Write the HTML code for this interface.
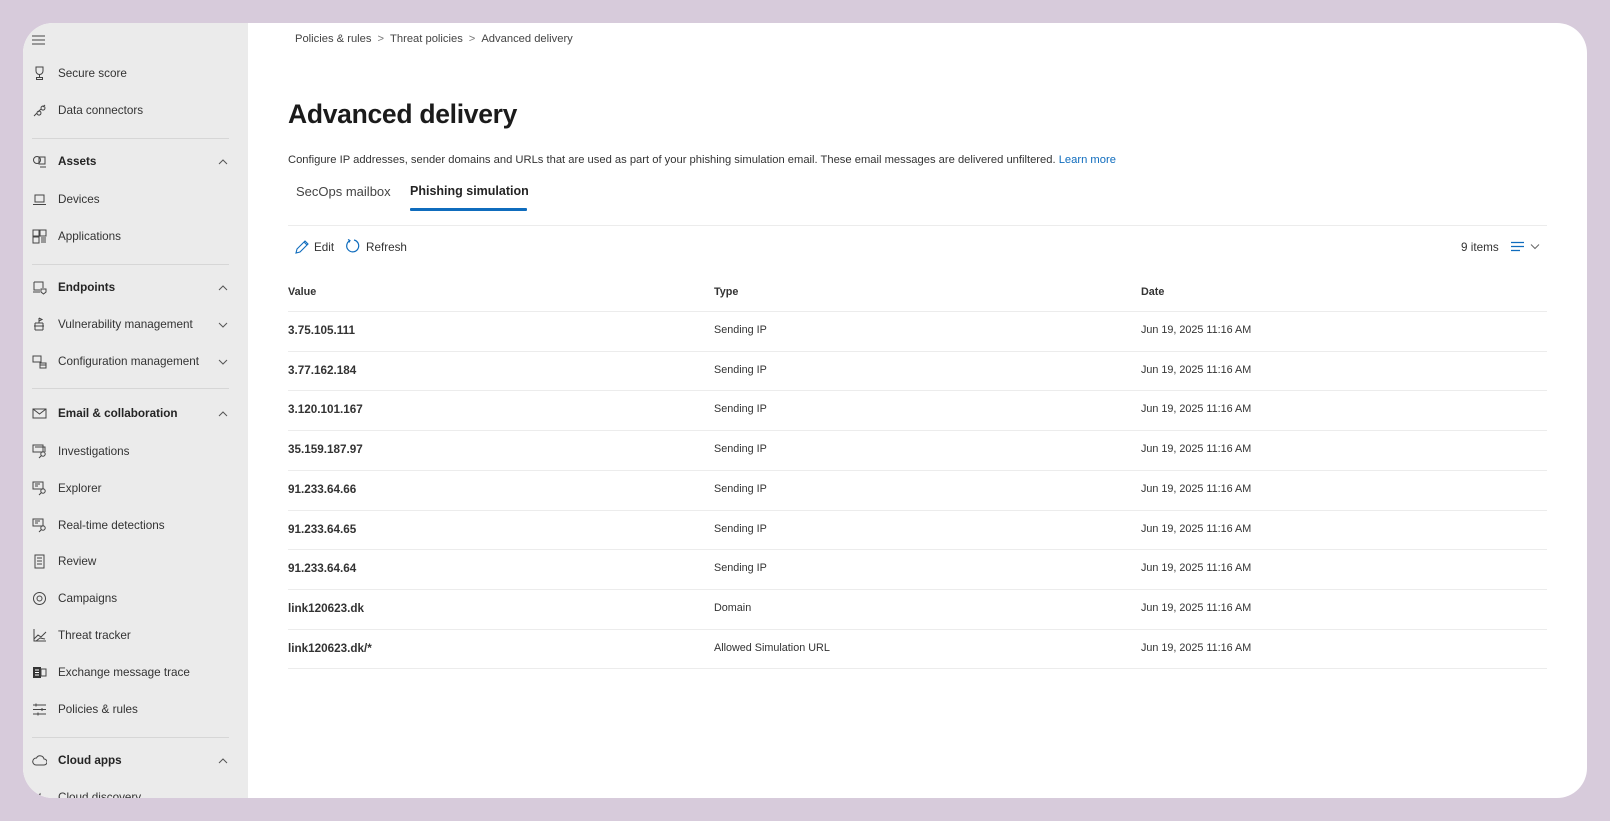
<!DOCTYPE html>
<html><head><meta charset="utf-8"><style>
*{box-sizing:border-box;margin:0;padding:0}
body{width:1610px;height:821px;background:#d7cbdb;font-family:"Liberation Sans",sans-serif;overflow:hidden;position:relative;color:#242424}
.card{position:absolute;left:23px;top:23px;width:1564px;height:775px;background:#fff;border-radius:30px;overflow:hidden}
.side{position:absolute;left:0;top:0;width:225px;height:100%;background:#ebebeb}
.ni{position:absolute;left:0;width:225px;height:30px;font-size:11.7px;color:#333}
.ni .ic{position:absolute;left:9px;top:7px;width:15px;height:15px}
.ni .t{position:absolute;left:35px;top:8px;white-space:nowrap}
.ni.b .t{font-weight:bold;color:#242424}
.ni .ch{position:absolute;left:194px;top:9px;width:12px;height:12px}
.dv{position:absolute;left:9px;width:197px;height:1px;background:#d6d6d6}
.main{position:absolute;left:265px;top:0;right:0;height:100%}
.bc{position:absolute;top:10px;left:7px;font-size:11.2px;color:#444;white-space:nowrap}
.bc span{margin:0 6px;color:#777}
h1{position:absolute;left:0;top:76px;font-size:26.5px;font-weight:bold;color:#1b1b1b;letter-spacing:-0.3px}
.desc{position:absolute;left:0;top:131px;font-size:11.2px;color:#333;white-space:nowrap}
.desc a{color:#0f6cbd;text-decoration:none}
.tab{position:absolute;top:161px;font-size:13px;color:#444}
.ul{position:absolute;left:122px;top:185px;width:117px;height:3px;background:#0f6cbd;border-radius:1px}
.hl{position:absolute;left:0;width:1259px;height:1px;background:#ececec}
.tb{position:absolute;top:218px;font-size:11.7px;color:#333}
.row{position:absolute;left:0;width:1259px;height:39.7px;font-size:10.8px;color:#333}
.row div{position:absolute;top:13px;white-space:nowrap}
.row .v{left:0;font-size:11.7px;font-weight:bold;color:#333}
.row .y{left:426px}
.row .d{left:853px}
</style></head><body>
<div class="card">
<div class="side">
<svg style="position:absolute;left:9px;top:12px" width="14" height="10" viewBox="0 0 14 10"><path d="M0 1h13M0 5h13M0 9h13" stroke="#444" stroke-width="1.1"/></svg>
<div class="ni" style="top:36px"><svg class="ic" viewBox="0 0 15 15"><path d="M4 1h7v4a3.5 3.5 0 0 1-7 0zM7.5 8.5v3M4.5 13.5h6v-2h-6z" fill="none" stroke="#444"/></svg><div class="t">Secure score</div></div>
<div class="ni" style="top:73px"><svg class="ic" viewBox="0 0 15 15"><path d="M2 13l3-3M5 10a2 2 0 1 1 0 .1M9 5a2 2 0 1 1 0 .1M11 4l2-2M6 9l3-3" fill="none" stroke="#444"/></svg><div class="t">Data connectors</div></div>
<div class="dv" style="top:115px"></div>
<div class="ni b" style="top:124px"><svg class="ic" viewBox="0 0 15 15"><circle cx="5" cy="6" r="3.5" fill="none" stroke="#444"/><path d="M7 3h6v7H7zM8 13h6" fill="none" stroke="#444"/></svg><div class="t">Assets</div><svg class="ch" viewBox="0 0 12 12"><path d="M2 8l4-4 4 4" fill="none" stroke="#555"/></svg></div>
<div class="ni" style="top:162px"><svg class="ic" viewBox="0 0 15 15"><path d="M3 3h9v7H3zM1 12.5h13" fill="none" stroke="#444"/></svg><div class="t">Devices</div></div>
<div class="ni" style="top:199px"><svg class="ic" viewBox="0 0 15 15"><path d="M1 1h6v6H1zM8 1h6v6H8zM1 8h6v6H1zM9 9h5M9 11h5M9 13h5" fill="none" stroke="#444"/></svg><div class="t">Applications</div></div>
<div class="dv" style="top:241px"></div>
<div class="ni b" style="top:250px"><svg class="ic" viewBox="0 0 15 15"><path d="M2 2h9v6M2 2v8h6M1 12h7" fill="none" stroke="#444"/><path d="M9 9h5v3l-2.5 2-2.5-2z" fill="none" stroke="#444"/></svg><div class="t">Endpoints</div><svg class="ch" viewBox="0 0 12 12"><path d="M2 8l4-4 4 4" fill="none" stroke="#555"/></svg></div>
<div class="ni" style="top:287px"><svg class="ic" viewBox="0 0 15 15"><path d="M7 1v5M7 1l3 1.5-3 1.5M3 6h8M2 9h10M3 13h8M3 6v7M11 6v7" fill="none" stroke="#444"/></svg><div class="t">Vulnerability management</div><svg class="ch" viewBox="0 0 12 12"><path d="M2 4l4 4 4-4" fill="none" stroke="#555"/></svg></div>
<div class="ni" style="top:324px"><svg class="ic" viewBox="0 0 15 15"><path d="M1 2h8v6H1zM8 9h6v5H8zM8 11h6" fill="none" stroke="#444"/></svg><div class="t">Configuration management</div><svg class="ch" viewBox="0 0 12 12"><path d="M2 4l4 4 4-4" fill="none" stroke="#555"/></svg></div>
<div class="dv" style="top:365px"></div>
<div class="ni b" style="top:376px"><svg class="ic" viewBox="0 0 15 15"><path d="M1 3h13v9H1zM1 3l6.5 5L14 3" fill="none" stroke="#444"/></svg><div class="t">Email &amp; collaboration</div><svg class="ch" viewBox="0 0 12 12"><path d="M2 8l4-4 4 4" fill="none" stroke="#555"/></svg></div>
<div class="ni" style="top:414px"><svg class="ic" viewBox="0 0 15 15"><path d="M1 1h10v7H1zM3 3h10v5" fill="none" stroke="#444"/><circle cx="11" cy="10" r="2.2" fill="none" stroke="#444"/><path d="M9.5 11.5L7 14" stroke="#444"/></svg><div class="t">Investigations</div></div>
<div class="ni" style="top:451px"><svg class="ic" viewBox="0 0 15 15"><path d="M1 1h10v7H1zM3 3h5M3 5h3" fill="none" stroke="#444"/><circle cx="11" cy="10" r="2.2" fill="none" stroke="#444"/><path d="M9.5 11.5L7 14" stroke="#444"/></svg><div class="t">Explorer</div></div>
<div class="ni" style="top:488px"><svg class="ic" viewBox="0 0 15 15"><path d="M1 1h10v7H1zM3 3h5M3 5h3" fill="none" stroke="#444"/><circle cx="11" cy="10" r="2.2" fill="none" stroke="#444"/><path d="M9.5 11.5L7 14" stroke="#444"/></svg><div class="t">Real-time detections</div></div>
<div class="ni" style="top:524px"><svg class="ic" viewBox="0 0 15 15"><path d="M3 1h9v13H3zM5 4h5M5 7h5M5 10h5" fill="none" stroke="#444"/></svg><div class="t">Review</div></div>
<div class="ni" style="top:561px"><svg class="ic" viewBox="0 0 15 15"><circle cx="7.5" cy="7.5" r="6" fill="none" stroke="#444"/><circle cx="7.5" cy="7.5" r="2.5" fill="none" stroke="#444"/></svg><div class="t">Campaigns</div></div>
<div class="ni" style="top:598px"><svg class="ic" viewBox="0 0 15 15"><path d="M2 1v12h12M2 11l4-4 3 2 5-5M4 13l4-3 5 1" fill="none" stroke="#444"/></svg><div class="t">Threat tracker</div></div>
<div class="ni" style="top:635px"><svg class="ic" viewBox="0 0 15 15"><path d="M1 2h8v11H1z" fill="#333"/><path d="M9 4h5v7H9z" fill="none" stroke="#444"/><path d="M3 5h4M3 7.5h4M3 10h4" stroke="#fff"/></svg><div class="t">Exchange message trace</div></div>
<div class="ni" style="top:672px"><svg class="ic" viewBox="0 0 15 15"><path d="M1 3h13M1 7.5h13M1 12h13M4 1.5v3M10 6v3M6 10.5v3" fill="none" stroke="#444"/></svg><div class="t">Policies &amp; rules</div></div>
<div class="dv" style="top:714px"></div>
<div class="ni b" style="top:723px"><svg class="ic" viewBox="0 0 15 15"><path d="M4 12h8a3 3 0 0 0 0-6 4 4 0 0 0-7.5-1A3.5 3.5 0 0 0 4 12z" fill="none" stroke="#444"/></svg><div class="t">Cloud apps</div><svg class="ch" viewBox="0 0 12 12"><path d="M2 8l4-4 4 4" fill="none" stroke="#555"/></svg></div>
<div class="ni" style="top:760px"><svg class="ic" viewBox="0 0 15 15"><path d="M2 10V4l3 3 3-3v6" fill="none" stroke="#444"/></svg><div class="t">Cloud discovery</div></div>
</div>
<div class="main">
<div class="bc">Policies &amp; rules<span>&gt;</span>Threat policies<span>&gt;</span>Advanced delivery</div>
<h1>Advanced delivery</h1>
<div class="desc">Configure IP addresses, sender domains and URLs that are used as part of your phishing simulation email. These email messages are delivered unfiltered. <a>Learn more</a></div>
<div class="tab" style="left:8px">SecOps mailbox</div>
<div class="tab" style="left:122px;font-weight:bold;color:#242424;font-size:12.5px">Phishing simulation</div>
<div class="ul"></div>
<div class="hl" style="top:202px"></div>
<svg style="position:absolute;left:6px;top:216px" width="16" height="16" viewBox="0 0 16 16"><path d="M2 14l1-4 8-8 3 3-8 8zM10 3l3 3" fill="none" stroke="#0f6cbd" stroke-width="1.1"/></svg>
<div class="tb" style="left:26px">Edit</div>
<svg style="position:absolute;left:57px;top:215px" width="16" height="16" viewBox="0 0 16 16"><path d="M5 2.5A6 6 0 1 0 9 2" fill="none" stroke="#0f6cbd" stroke-width="1.2"/><path d="M3 1.5l2 1-1 2" fill="none" stroke="#0f6cbd" stroke-width="1.1"/></svg>
<div class="tb" style="left:78px">Refresh</div>
<div class="tb" style="left:1173px">9 items</div>
<svg style="position:absolute;left:1223px;top:218px" width="34" height="12" viewBox="0 0 34 12"><path d="M0 1.5h13M0 5.5h13M0 9.5h9" stroke="#0f6cbd" stroke-width="1.2"/><path d="M20 3.5l4 4 4-4" fill="none" stroke="#666"/></svg>
<div style="position:absolute;top:263px;left:0;font-size:10.8px;font-weight:bold;color:#333">Value</div>
<div style="position:absolute;top:263px;left:426px;font-size:10.8px;font-weight:bold;color:#333">Type</div>
<div style="position:absolute;top:263px;left:853px;font-size:10.8px;font-weight:bold;color:#333">Date</div>
<div class="hl" style="top:288px"></div>
<div class="row" style="top:288px"><div class="v">3.75.105.111</div><div class="y">Sending IP</div><div class="d">Jun 19, 2025 11:16 AM</div></div>
<div class="hl" style="top:327.7px"></div>
<div class="row" style="top:327.7px"><div class="v">3.77.162.184</div><div class="y">Sending IP</div><div class="d">Jun 19, 2025 11:16 AM</div></div>
<div class="hl" style="top:367.4px"></div>
<div class="row" style="top:367.4px"><div class="v">3.120.101.167</div><div class="y">Sending IP</div><div class="d">Jun 19, 2025 11:16 AM</div></div>
<div class="hl" style="top:407.1px"></div>
<div class="row" style="top:407.1px"><div class="v">35.159.187.97</div><div class="y">Sending IP</div><div class="d">Jun 19, 2025 11:16 AM</div></div>
<div class="hl" style="top:446.8px"></div>
<div class="row" style="top:446.8px"><div class="v">91.233.64.66</div><div class="y">Sending IP</div><div class="d">Jun 19, 2025 11:16 AM</div></div>
<div class="hl" style="top:486.5px"></div>
<div class="row" style="top:486.5px"><div class="v">91.233.64.65</div><div class="y">Sending IP</div><div class="d">Jun 19, 2025 11:16 AM</div></div>
<div class="hl" style="top:526.2px"></div>
<div class="row" style="top:526.2px"><div class="v">91.233.64.64</div><div class="y">Sending IP</div><div class="d">Jun 19, 2025 11:16 AM</div></div>
<div class="hl" style="top:565.9px"></div>
<div class="row" style="top:565.9px"><div class="v">link120623.dk</div><div class="y">Domain</div><div class="d">Jun 19, 2025 11:16 AM</div></div>
<div class="hl" style="top:605.6px"></div>
<div class="row" style="top:605.6px"><div class="v">link120623.dk/*</div><div class="y">Allowed Simulation URL</div><div class="d">Jun 19, 2025 11:16 AM</div></div>
<div class="hl" style="top:645.3px"></div>
</div>
</div>
</body></html>
